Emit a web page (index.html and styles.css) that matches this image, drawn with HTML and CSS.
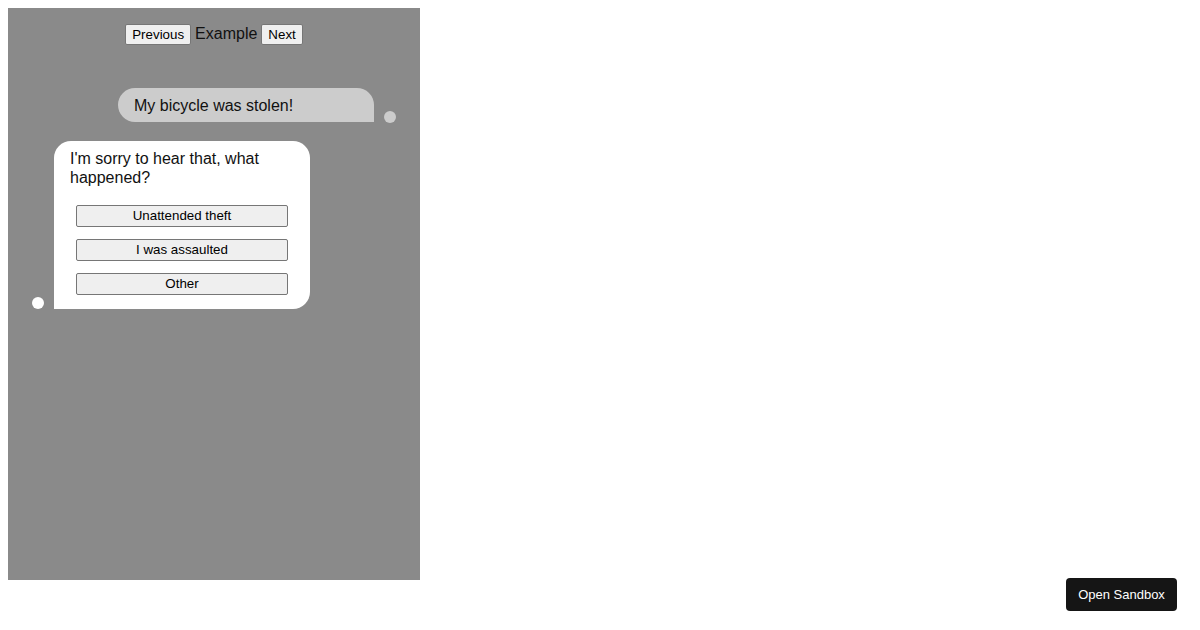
FILE: index.html
```html
<!DOCTYPE html>
<html>
<head>
<meta charset="utf-8">
<link rel="stylesheet" href="styles.css">
</head>
<body>
<div class="panel">
  <div class="header">
    <button class="nav-btn">Previous</button>
    <span class="title">Example</span>
    <button class="nav-btn">Next</button>
  </div>
  <div class="messages">
    <div class="row row-user">
      <div class="bubble bubble-user">My bicycle was stolen!</div>
      <div class="dot dot-user"></div>
    </div>
    <div class="row row-bot">
      <div class="dot dot-bot"></div>
      <div class="bubble bubble-bot">
        <div class="bot-text">I'm sorry to hear that, what happened?</div>
        <div class="choices">
          <button class="choice">Unattended theft</button>
          <button class="choice">I was assaulted</button>
          <button class="choice">Other</button>
        </div>
      </div>
    </div>
  </div>
</div>
<button class="sandbox">Open Sandbox</button>
</body>
</html>
```
FILE: styles.css
```css
html, body {
  margin: 0;
  padding: 0;
  background: #ffffff;
}
body {
  padding: 8px;
  font-family: "Liberation Sans", Arial, sans-serif;
  color: #111;
}
.panel {
  width: 412px;
  height: 572px;
  background: #8a8a8a;
  box-sizing: border-box;
  padding-top: 16px;
  display: flex;
  flex-direction: column;
}
.header {
  display: flex;
  justify-content: center;
  align-items: center;
  gap: 4px;
  height: 21px;
}
.nav-btn, .choice {
  font-family: "Liberation Sans", Arial, sans-serif;
  font-size: 13.333px;
  line-height: 15px;
  color: #000;
  background: #efefef;
  border: 1px solid #767676;
  border-radius: 2px;
  padding: 2px 6px;
  margin: 0;
}
.title {
  font-size: 16px;
  line-height: 18px;
  color: #111;
  position: relative;
  top: -1px;
}
.messages {
  margin-top: 43px;
  display: flex;
  flex-direction: column;
  gap: 19px;
}
.row {
  display: flex;
  align-items: flex-end;
  gap: 10px;
}
.row-user {
  justify-content: flex-end;
  padding-right: 24px;
}
.row-bot {
  justify-content: flex-start;
  padding-left: 24px;
}
.bubble {
  width: 256px;
  box-sizing: border-box;
  padding: 8px 16px;
  font-size: 16px;
  line-height: 18px;
}
.bubble-user {
  background: #cccccc;
  border-radius: 17px 17px 0 17px;
  padding: 9px 16px 7px;
}
.bubble-bot {
  background: #ffffff;
  border-radius: 17px 17px 17px 0;
  padding: 9px 16px 8px;
}
.dot {
  width: 12px;
  height: 12px;
  border-radius: 50%;
  flex: none;
}
.dot-user {
  background: #cccccc;
  margin-bottom: -1px;
}
.dot-bot {
  background: #ffffff;
}
.bot-text {
  line-height: 18.6px;
}
.choices {
  margin-top: 12px;
  display: flex;
  flex-direction: column;
}
.choice {
  margin: 6px;
  height: 22px;
  padding: 1px 6px 3px;
}
.sandbox {
  position: fixed;
  right: 23px;
  bottom: 19px;
  background: #151515;
  color: #ffffff;
  border: none;
  border-radius: 4px;
  font-family: "Liberation Sans", Arial, sans-serif;
  font-size: 13px;
  line-height: 15px;
  padding: 9px 12px;
  width: 111px;
}
```
